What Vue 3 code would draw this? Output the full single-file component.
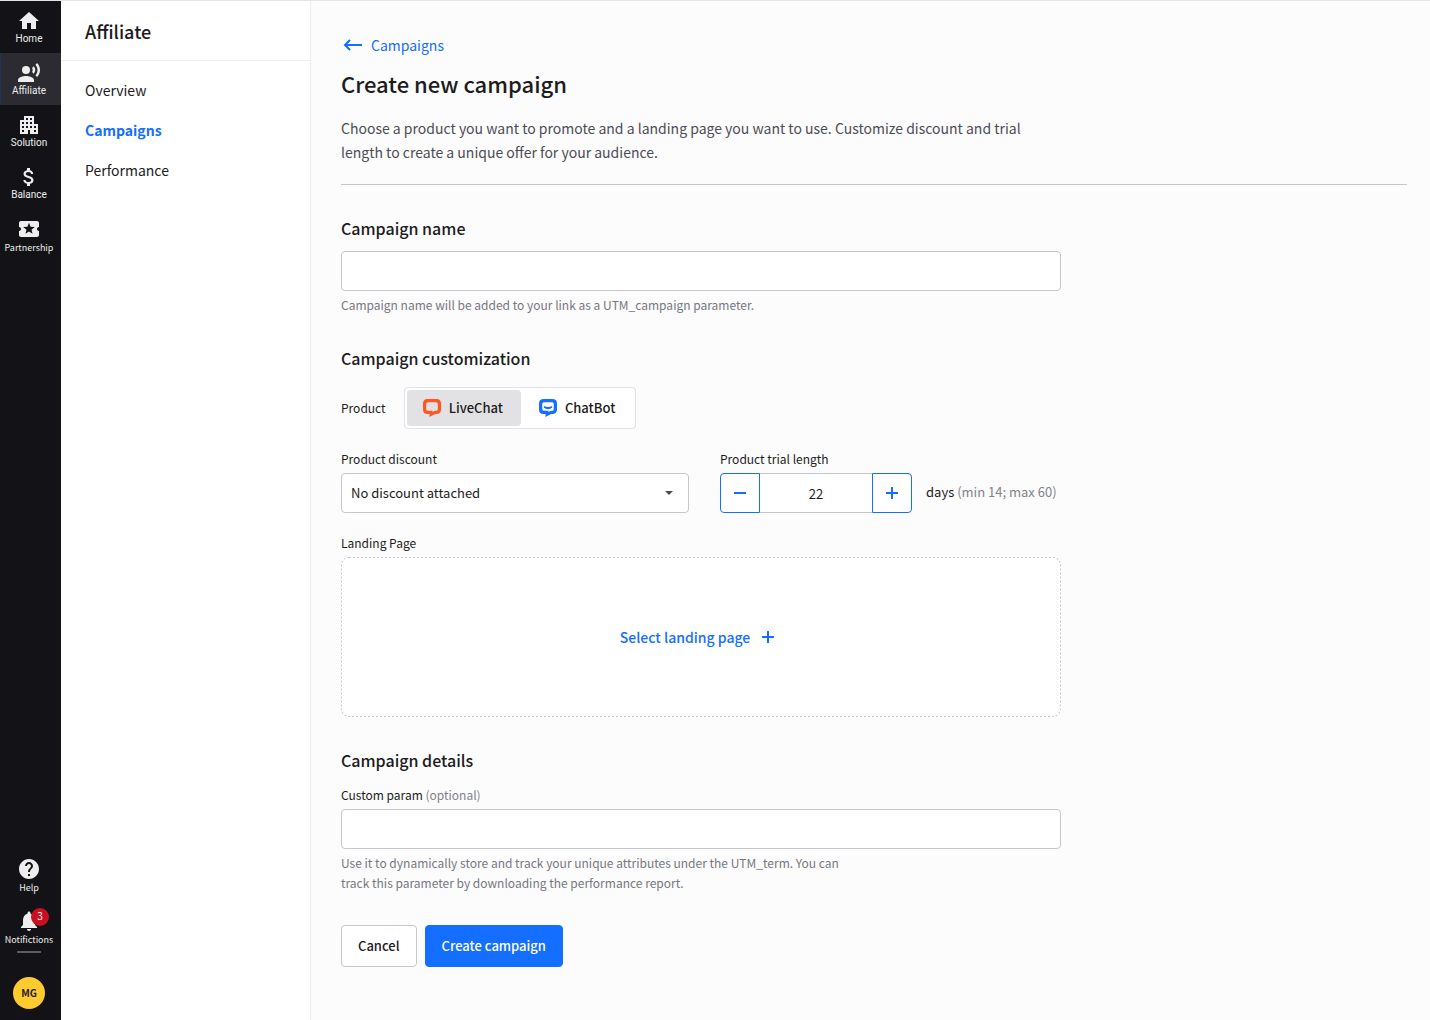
<template>
  <div class="app">
    <nav class="rail" aria-label="Main">
      <a v-for="item in topItems" :key="item.label" href="#" class="rail-item" :class="[{ active: item.active }, item.face]">
        <svg class="rail-icon" viewBox="0 0 24 24"><path :d="item.icon" /></svg>
        <span>{{ item.label }}</span>
      </a>
      <div class="rail-bottom">
        <a v-for="item in bottomItems" :key="item.label" href="#" class="rail-item source">
          <svg class="rail-icon" viewBox="0 0 24 24"><path :d="item.icon" /></svg>
          <span>{{ item.label }}</span>
          <span v-if="item.badge" class="badge">{{ item.badge }}</span>
        </a>
        <hr class="rail-line" />
        <button type="button" class="avatar">MG</button>
      </div>
    </nav>

    <aside class="side">
      <div class="side-title">Affiliate</div>
      <a v-for="link in sideLinks" :key="link" href="#" class="side-link" :class="{ current: link === 'Campaigns' }">{{ link }}</a>
    </aside>

    <main class="main">
      <header class="head">
        <a href="#" class="back">
          <svg width="21" height="14" viewBox="0 0 21 14"><path d="M21 7H4M9 2L4 7l5 5" /></svg>
          Campaigns
        </a>
        <h1>Create new campaign</h1>
        <p>Choose a product you want to promote and a landing page you want to use. Customize discount and trial length to create a unique offer for your audience.</p>
      </header>

      <form class="form" @submit.prevent>
        <section>
          <h2><label for="name">Campaign name</label></h2>
          <input id="name" v-model="name" type="text" class="field name-field" />
          <p class="hint">Campaign name will be added to your link as a UTM_campaign parameter.</p>
        </section>

        <section>
          <h2>Campaign customization</h2>
          <div class="product">
            <span id="product-label" class="label">Product</span>
            <div class="segments" role="radiogroup" aria-labelledby="product-label">
              <label v-for="p in products" :key="p.value" class="segment" :class="{ selected: product === p.value }">
                <input v-model="product" type="radio" name="product" :value="p.value" />
                <svg width="18" height="18" viewBox="0 0 18 18" :class="p.value">
                  <path fill-rule="evenodd" :d="bubble" />
                  <path v-if="p.value === 'chatbot'" d="M4.800 7q4.200 1.800 8.400 0v1.800q-4.200 2.800-8.400 0z" />
                </svg>
                {{ p.label }}
              </label>
            </div>
          </div>

          <div class="row">
            <div>
              <label for="discount" class="label">Product discount</label>
              <div class="select">
                <select id="discount" v-model="discount" class="field">
                  <option value="none">No discount attached</option>
                </select>
                <svg width="8" height="4" viewBox="0 0 8 4"><path d="M0 0h8L4 4z" /></svg>
              </div>
            </div>
            <div>
              <label for="trial" class="label">Product trial length</label>
              <div class="trial">
                <div class="stepper">
                  <button type="button" aria-label="Decrease" @click="step(-1)">
                    <svg width="12" height="12" viewBox="0 0 12 12"><path d="M0 6h12" /></svg>
                  </button>
                  <input id="trial" v-model.number="trial" type="number" :min="MIN" :max="MAX" />
                  <button type="button" aria-label="Increase" @click="step(1)">
                    <svg width="12" height="12" viewBox="0 0 12 12"><path d="M0 6h12M6 0v12" /></svg>
                  </button>
                </div>
                <span class="days">days <span class="muted">(min {{ MIN }}; max {{ MAX }})</span></span>
              </div>
            </div>
          </div>

          <div id="landing-label" class="label">Landing Page</div>
          <div class="landing" role="group" aria-labelledby="landing-label">
            <svg class="outline"><rect width="100%" height="100%" rx="8" /></svg>
            <button type="button" class="landing-button">
              Select landing page
              <svg width="12" height="12" viewBox="0 0 12 12"><path d="M0 6h12M6 0v12" /></svg>
            </button>
          </div>
        </section>

        <section>
          <h2>Campaign details</h2>
          <label for="param" class="label param-label">Custom param <span class="muted">(optional)</span></label>
          <input id="param" v-model="param" type="text" class="field" />
          <p class="hint">Use it to dynamically store and track your unique attributes under the UTM_term. You can track this parameter by downloading the performance report.</p>
        </section>

        <div class="actions">
          <button type="button" class="btn">Cancel</button>
          <button type="submit" class="btn primary">Create campaign</button>
        </div>
      </form>
    </main>
  </div>
</template>

<script setup>
import { ref } from 'vue';

const MIN = 14;
const MAX = 60;

const name = ref('');
const product = ref('livechat');
const discount = ref('none');
const trial = ref(22);
const param = ref('');

const step = (delta) => {
  trial.value = Math.min(MAX, Math.max(MIN, trial.value + delta));
};

const sideLinks = ['Overview', 'Campaigns', 'Performance'];

const products = [
  { value: 'livechat', label: 'LiveChat' },
  { value: 'chatbot', label: 'ChatBot' },
];

// speech bubble shared by both product logos
const bubble =
  'M4.500 0h9Q18 0 18 4.500v6q0 4-4 4.400l-2.500 .300L6.500 18v-3h-2Q0 15 0 10.500v-6Q0 0 4.500 0z' +
  'M5 3.200q-1.800 0-1.800 1.800v5q0 1.800 1.800 1.800h4.500v1.200l1.800-1.100 2-.200q1.500-.200 1.500-1.700V5q0-1.800-1.800-1.800z';

const topItems = [
  { label: 'Home', icon: 'M10 20v-6h4v6h5v-8h3L12 3 2 12h3v8z' },
  {
    label: 'Affiliate',
    active: true,
    icon: 'M9 5a4 4 0 1 0 0 8a4 4 0 1 0 0-8zM9 15c-2.670 0-8 1.340-8 4v2h16v-2c0-2.660-5.330-4-8-4zM16.760 5.360l-1.680 1.690c.840 1.180.840 2.710 0 3.890l1.680 1.690c2.020-2.020 2.020-5.070 0-7.270zM20.070 2l-1.630 1.630c2.770 3.020 2.770 7.560 0 10.740L20.070 16c3.900-3.890 3.910-9.950 0-14z',
  },
  { label: 'Solution', icon: 'M17 11V3H7v4H3v14h8v-4h2v4h8V11h-4zM7 19H5v-2h2v2zm0-4H5v-2h2v2zm0-4H5V9h2v2zm4 4H9v-2h2v2zm0-4H9V9h2v2zm0-4H9V5h2v2zm4 8h-2v-2h2v2zm0-4h-2V9h2v2zm0-4h-2V5h2v2zm4 12h-2v-2h2v2zm0-4h-2v-2h2v2z' },
  { label: 'Balance', icon: 'M11.800 10.900c-2.270-.590-3-1.200-3-2.150 0-1.090 1.010-1.850 2.700-1.850 1.780 0 2.440.850 2.500 2.100h2.210c-.070-1.720-1.120-3.300-3.210-3.810V3h-3v2.160c-1.940.420-3.500 1.680-3.500 3.610 0 2.310 1.910 3.460 4.700 4.130 2.500.600 3 1.480 3 2.410 0 .690-.490 1.790-2.700 1.790-2.060 0-2.870-.920-2.980-2.100h-2.200c.120 2.190 1.760 3.420 3.680 3.830V21h3v-2.150c1.950-.370 3.500-1.500 3.500-3.550 0-2.840-2.430-3.810-4.700-4.400z' },
  { label: 'Partnership', face: 'source', icon: 'M20 12c0-1.100.900-2 2-2V6c0-1.100-.900-2-2-2H4c-1.100 0-1.990.900-1.990 2v4c1.100 0 1.990.900 1.990 2s-.890 2-2 2v4c0 1.100.900 2 2 2h16c1.100 0 2-.900 2-2v-4c-1.100 0-2-.900-2-2zm-4.420 4.800L12 14.500l-3.580 2.300 1.080-4.120-3.290-2.690 4.240-.250L12 5.800l1.540 3.950 4.240.250-3.290 2.690 1.090 4.110z' },
];

const bottomItems = [
  { label: 'Help', icon: 'M12 2C6.480 2 2 6.480 2 12s4.480 10 10 10 10-4.480 10-10S17.520 2 12 2zm1 17h-2v-2h2v2zm2.070-7.750l-.900.920C13.450 12.900 13 13.500 13 15h-2v-.500c0-1.100.450-2.100 1.170-2.830l1.240-1.260c.370-.360.590-.860.590-1.410 0-1.100-.900-2-2-2s-2 .900-2 2H8c0-2.210 1.790-4 4-4s4 1.790 4 4c0 .880-.360 1.680-.930 2.250z' },
  { label: 'Notifictions', badge: 3, icon: 'M12 22c1.100 0 2-.900 2-2h-4c0 1.100.890 2 2 2zm6-6v-5c0-3.070-1.640-5.640-4.500-6.320V4c0-.830-.670-1.500-1.500-1.500s-1.500.670-1.500 1.500v.680C7.630 5.360 6 7.920 6 11v5l-2 2v1h16v-1l-2-2z' },
];
</script>

<style>
body {
  margin: 0;
  background: #fcfcfc;
}
</style>

<style scoped>
.app {
  display: grid;
  grid-template-columns: 61px 250px 1fr;
  min-height: 100vh;
  box-sizing: border-box;
  border-top: 1px solid #e5e5e5;
  color: #1b1b20;
  font-family: "Noto Sans CJK SC", sans-serif;
  font-size: 14px;
  line-height: 24px;
}

.app *,
.app *::before {
  box-sizing: border-box;
}

button,
input,
select {
  margin: 0;
  font: inherit;
  color: inherit;
}

button,
select {
  cursor: pointer;
}

h1,
h2,
p {
  margin: 0;
}

a {
  color: inherit;
  text-decoration: none;
}

/* dark icon rail */
.rail {
  display: flex;
  flex-direction: column;
  background: #131317;
}

.rail-item {
  position: relative;
  display: flex;
  flex-direction: column;
  align-items: center;
  height: 52px;
  padding: 8px 3px 0 0;
  color: #eee;
  font-family: Roboto, sans-serif;
  font-size: 10px;
  line-height: 12px;
  white-space: nowrap;
}

.rail-item.source {
  font-family: "Noto Sans CJK SC", sans-serif;
  font-size: 9px;
  line-height: 14px;
}

.rail-item.active {
  background: #2b2b31;
  box-shadow: inset 1px 0 #1f3358;
}

.rail-icon {
  width: 24px;
  height: 24px;
  fill: currentColor;
}

.rail-bottom {
  display: flex;
  flex-direction: column;
  margin-top: auto;
  padding-bottom: 11px;
}

.rail-bottom .rail-item {
  height: 50px;
}

.rail-bottom .rail-item + .rail-item {
  margin-top: 2px;
}

.badge {
  position: absolute;
  top: 7px;
  left: 31px;
  width: 18px;
  height: 18px;
  border-radius: 50%;
  background: #c8101e;
  color: #fff;
  font-size: 10px;
  line-height: 16px;
  text-align: center;
}

.rail-line {
  width: 24px;
  height: 2px;
  margin: 0 0 24px 17px;
  border: 0;
  background: #5c5c62;
}

.avatar {
  width: 32px;
  height: 32px;
  margin-left: 13px;
  padding: 0;
  border: 0;
  border-radius: 50%;
  background: #ffcb2e;
  color: #1b1b20;
  font-size: 10px;
  font-weight: 700;
}

/* section menu */
.side {
  display: flex;
  flex-direction: column;
  background: #fff;
  border-right: 1px solid #eee;
}

.side-title {
  height: 60px;
  margin-bottom: 9px;
  padding: 0 24px;
  border-bottom: 1px solid #eee;
  font-size: 18px;
  font-weight: 500;
  line-height: 60px;
}

.side-link {
  padding: 0 24px;
  line-height: 40px;
}

.side-link.current {
  color: #146eff;
  font-weight: 700;
}

/* page */
.main {
  padding: 32px 23px 52px 30px;
}

.head {
  padding-bottom: 20px;
  border-bottom: 1px solid #c6c7cd;
}

.back {
  display: inline-flex;
  align-items: center;
  gap: 9px;
  color: #146eff;
}

.back svg {
  fill: none;
  stroke: currentColor;
  stroke-width: 2;
}

h1 {
  margin: 9px 0 17px;
  font-size: 22px;
  font-weight: 500;
  line-height: 32px;
}

.head p {
  max-width: 720px;
  color: #4c4c55;
}

.form {
  max-width: 720px;
}

section {
  padding-top: 30px;
}

h2 {
  font-size: 16px;
  font-weight: 500;
  line-height: 26px;
}

.field {
  display: block;
  width: 100%;
  height: 40px;
  padding: 0 9px;
  border: 1px solid #c6c7cd;
  border-radius: 4px;
  background: #fff;
}

.name-field {
  margin-top: 10px;
}

.hint {
  max-width: 524px;
  margin-top: 4px;
  color: #77777f;
  font-size: 12px;
  line-height: 20px;
}

.label {
  display: block;
  margin-bottom: 4px;
  font-size: 12px;
  line-height: 20px;
}

.muted {
  color: #82828a;
}

.product {
  display: flex;
  align-items: center;
  gap: 18px;
  margin: 16px 0 20px;
}

.product .label {
  margin: 0;
}

.segments {
  display: flex;
  gap: 2px;
  padding: 2px;
  border: 1px solid #e2e2e4;
  border-radius: 4px;
  background: #fff;
}

.segment {
  position: relative;
  display: flex;
  align-items: center;
  gap: 8px;
  height: 36px;
  padding: 0 18px 0 16px;
  border-radius: 4px;
  font-size: 13px;
  font-weight: 500;
  cursor: pointer;
}

.segment.selected {
  background: #e2e2e4;
}

.segment input {
  position: absolute;
  inset: 0;
  opacity: 0;
}

.livechat {
  fill: #ff5722;
}

.chatbot {
  fill: #146eff;
}

.row {
  display: grid;
  grid-template-columns: 348px 1fr;
  gap: 31px;
  margin-bottom: 20px;
}

.select {
  position: relative;
}

.select select {
  appearance: none;
  font-size: 13px;
}

.select svg {
  position: absolute;
  top: 18px;
  right: 16px;
  fill: #4c4c55;
  pointer-events: none;
}

.trial {
  display: flex;
  align-items: center;
  gap: 14px;
}

.stepper {
  display: flex;
}

.stepper button {
  display: grid;
  place-items: center;
  width: 40px;
  height: 40px;
  padding: 0;
  border: 1px solid #146eff;
  border-radius: 4px 0 0 4px;
  background: #fff;
}

.stepper button:last-child {
  border-radius: 0 4px 4px 0;
}

.stepper svg,
.landing-button svg {
  fill: none;
  stroke: #146eff;
  stroke-width: 2;
}

.stepper input {
  width: 112px;
  height: 40px;
  padding: 0;
  border: solid #c6c7cd;
  border-width: 1px 0;
  background: #fff;
  font-size: 13px;
  text-align: center;
  appearance: textfield;
}

.stepper input::-webkit-inner-spin-button {
  appearance: none;
}

.days {
  padding-bottom: 2px;
  font-size: 13px;
}

.landing {
  position: relative;
  display: grid;
  place-items: center;
  height: 160px;
  border-radius: 8px;
  background: #fff;
}

.outline {
  position: absolute;
  inset: 0;
  width: 100%;
  height: 100%;
  border-radius: 8px;
}

.outline rect {
  fill: none;
  stroke: #c6c7cd;
  stroke-width: 2;
  stroke-dasharray: 2 2;
}

.landing-button {
  position: relative;
  display: flex;
  align-items: center;
  gap: 12px;
  padding: 0 8px 0 0;
  border: 0;
  background: none;
  color: #146eff;
  font-weight: 500;
}

.param-label {
  margin-top: 12px;
}

.actions {
  display: flex;
  gap: 8px;
  margin-top: 32px;
}

.btn {
  height: 42px;
  padding: 0 16px;
  border: 1px solid #c6c7cd;
  border-radius: 4px;
  background: #fff;
  font-size: 13px;
  font-weight: 500;
}

.btn.primary {
  border-color: #146eff;
  background: #146eff;
  color: #fff;
}
</style>
